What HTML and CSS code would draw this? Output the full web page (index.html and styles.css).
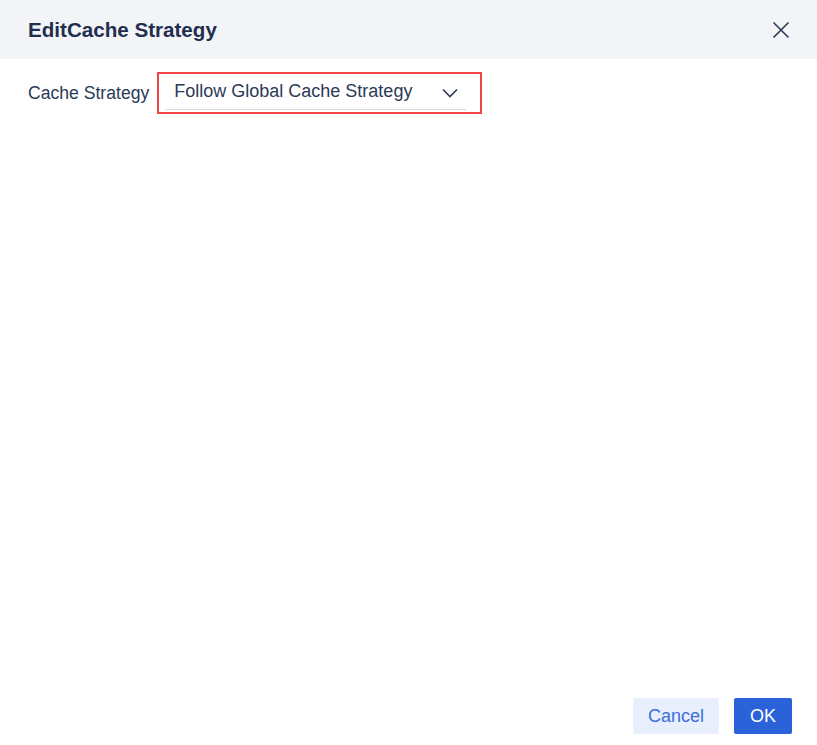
FILE: index.html
```html
<!DOCTYPE html>
<html>
<head>
<meta charset="utf-8">
<link rel="stylesheet" href="styles.css">
</head>
<body>
<div class="dialog">
  <div class="header">
    <div class="title">EditCache Strategy</div>
    <button class="close" aria-label="Close">
      <svg width="18" height="18" viewBox="0 0 18 18"><path d="M1.5 1.5 L16.5 16.5 M16.5 1.5 L1.5 16.5" stroke="#2b3a55" stroke-width="1.6" fill="none"/></svg>
    </button>
  </div>
  <div class="body">
    <div class="row">
      <span class="label">Cache Strategy</span>
      <div class="select-box">
        <div class="select">
          <span class="value">Follow Global Cache Strategy</span>
          <svg class="chev" width="16" height="10" viewBox="0 0 16 10"><path d="M1 1.5 L8 8.5 L15 1.5" stroke="#2b3a55" stroke-width="1.6" fill="none"/></svg>
        </div>
      </div>
    </div>
  </div>
  <div class="footer">
    <button class="btn cancel">Cancel</button>
    <button class="btn ok">OK</button>
  </div>
</div>
</body>
</html>
```
FILE: styles.css
```css
html, body { margin: 0; padding: 0; }
body {
  font-family: "Liberation Sans", Arial, sans-serif;
  background: #fff;
  width: 817px;
  height: 745px;
  overflow: hidden;
}
.dialog {
  display: flex;
  flex-direction: column;
  height: 745px;
}
.header {
  height: 59px;
  background: #f2f4f7;
  display: flex;
  align-items: center;
  justify-content: space-between;
  padding: 0 28px;
  box-sizing: border-box;
}
.title {
  font-size: 20.6px;
  font-weight: bold;
  color: #1f2e4f;
}
.close {
  border: none;
  background: none;
  padding: 0;
  width: 18px;
  height: 18px;
  margin-right: -1px;
  display: flex;
}
.body {
  flex: 1;
  padding: 13px 0 0 28px;
}
.row {
  display: flex;
  align-items: center;
}
.label {
  font-size: 17.6px;
  color: #2b3a55;
  margin-right: 8px;
}
.select-box {
  width: 325px;
  height: 42px;
  box-sizing: border-box;
  border: 2.5px solid #f04444;
  padding: 0 14px 0 6px;
}
.select {
  height: 35px;
  border-bottom: 1px solid #d5dae3;
  display: flex;
  align-items: center;
  justify-content: space-between;
  padding: 0 8px 0 9px;
}
.value {
  font-size: 18px;
  color: #2b3a55;
}
.chev { margin-top: 2px; }
.footer {
  display: flex;
  justify-content: flex-end;
  gap: 15px;
  padding: 0 25px 11px 0;
}
.btn {
  height: 36px;
  border: none;
  border-radius: 2px;
  font-family: "Liberation Sans", Arial, sans-serif;
  font-size: 18px;
  padding: 0;
}
.cancel {
  width: 86px;
  background: #e8eefb;
  color: #3a6fdc;
}
.ok {
  width: 58px;
  background: #2b62d9;
  color: #fff;
}
```
